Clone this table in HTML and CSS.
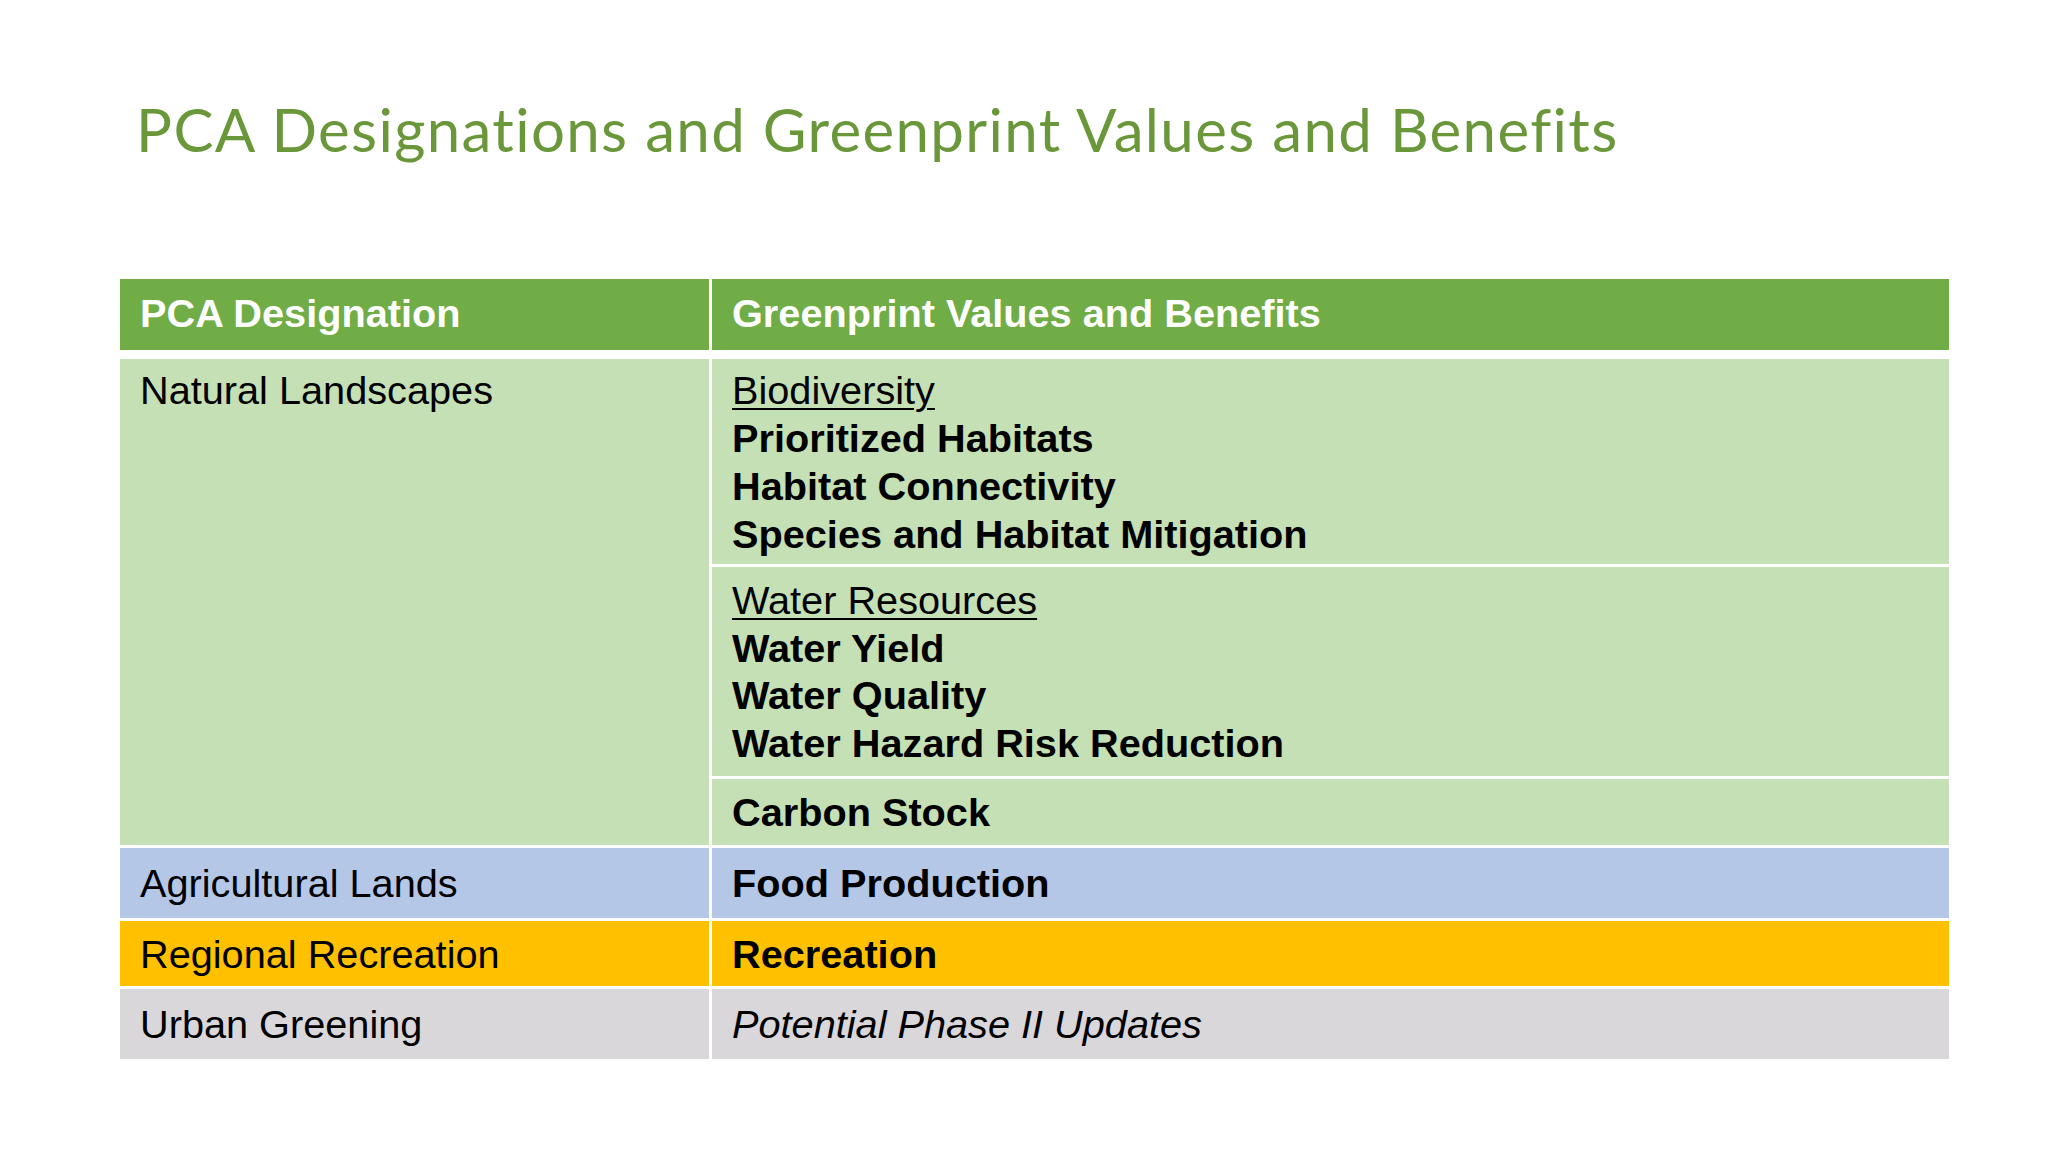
FILE: index.html
```html
<!DOCTYPE html>
<html lang="en">
<head>
<meta charset="utf-8">
<title>PCA Designations and Greenprint Values and Benefits</title>
<link rel="stylesheet" href="styles.css">
</head>
<body>
<main class="slide">
  <h1 class="title">PCA Designations and Greenprint Values and Benefits</h1>
  <div class="table">
    <div class="cell head">PCA Designation</div>
    <div class="cell head">Greenprint Values and Benefits</div>

    <div class="cell green natural">Natural Landscapes</div>
    <div class="cell green top">
      <div class="sub">Biodiversity</div>
      <div class="b">Prioritized Habitats</div>
      <div class="b">Habitat Connectivity</div>
      <div class="b">Species and Habitat Mitigation</div>
    </div>
    <div class="cell green top water">
      <div class="sub">Water Resources</div>
      <div class="b">Water Yield</div>
      <div class="b">Water Quality</div>
      <div class="b">Water Hazard Risk Reduction</div>
    </div>
    <div class="cell green"><span class="b">Carbon Stock</span></div>

    <div class="cell blue">Agricultural Lands</div>
    <div class="cell blue"><span class="b">Food Production</span></div>

    <div class="cell orange">Regional Recreation</div>
    <div class="cell orange"><span class="b">Recreation</span></div>

    <div class="cell gray">Urban Greening</div>
    <div class="cell gray"><span class="i">Potential Phase II Updates</span></div>
  </div>
</main>
</body>
</html>
```
FILE: styles.css
```css
html, body {
  margin: 0;
  padding: 0;
  background: #ffffff;
}

.slide {
  width: 2048px;
  height: 1152px;
  box-sizing: border-box;
  padding: 95px 0 0 0;
  display: flex;
  flex-direction: column;
}

.title {
  margin: 0 0 0 136px;
  font-family: "Lato", "Open Sans", sans-serif;
  font-weight: 400;
  font-size: 60px;
  line-height: 68px;
  letter-spacing: 1.35px;
  font-variant-ligatures: none;
  color: #6a973a;
  white-space: nowrap;
}

.table {
  margin: 116px 0 0 120px;
  display: grid;
  grid-template-columns: 589px 1237px;
  grid-template-rows: 77px 205px 209px 66px 70px 65px 70px;
  column-gap: 3px;
  row-gap: 3px;
  font-family: "Liberation Sans", Arial, sans-serif;
  font-size: 39.7px;
  line-height: 48px;
  color: #000000;
}

.cell {
  box-sizing: border-box;
  padding: 0 20px;
  display: flex;
  flex-direction: column;
  justify-content: center;
}

.head {
  height: 71px;
  margin-bottom: 6px;
  padding-bottom: 3px;
  background: #70ad47;
  color: #ffffff;
  font-weight: 700;
}

.natural {
  grid-row: 2 / span 3;
  justify-content: flex-start;
  padding-top: 7px;
}

.top {
  justify-content: flex-start;
  padding-top: 7px;
}

.water {
  padding-top: 10px;
  line-height: 47.5px;
}

.green { background: #c5e0b4; }
.blue { background: #b4c7e7; }
.orange { background: #ffc000; }
.gray { background: #d9d7da; }

.sub {
  text-decoration: underline;
  text-decoration-thickness: 2px;
  text-underline-offset: 4px;
}

.b { font-weight: 700; }
.i { font-style: italic; }
```
